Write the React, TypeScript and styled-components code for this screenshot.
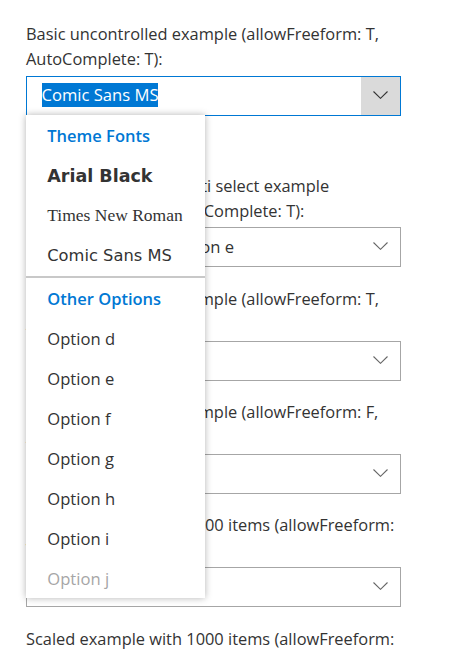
import React from 'react';
import styled, { createGlobalStyle } from 'styled-components';

const GlobalStyle = createGlobalStyle`
  html, body { margin: 0; padding: 0; background: #ffffff; }
  body {
    font-family: "Open Sans", "Noto Sans", sans-serif;
    color: #333333;
  }
  * { box-sizing: border-box; }
`;

const Page = styled.div`
  display: flex;
  flex-direction: column;
  gap: 13.75px;
  padding: 16px 0 0 26px;
`;

const Field = styled.div`
  display: flex;
  flex-direction: column;
  width: 375px;
`;

const Label = styled.label`
  display: block;
  padding: 4.75px 0;
  font-size: 16.4px;
  line-height: 25px;
  font-weight: 400;
  color: #333333;
`;

const ComboRoot = styled.div<{ $focused?: boolean }>`
  position: relative;
  display: flex;
  height: 40px;
  border: 1.25px solid ${(p) => (p.$focused ? '#0078d4' : '#a6a6a6')};
  background: #ffffff;
`;

const InputArea = styled.div`
  flex: 1;
  display: flex;
  align-items: center;
  padding: 0 0 2px 14.5px;
  font-size: 16.6px;
  color: #333333;
  white-space: nowrap;
  overflow: hidden;
`;

const Selected = styled.span`
  display: inline-block;
  line-height: 24px;
  background: #0078d4;
  color: #ffffff;
`;

const CaretButton = styled.div<{ $active?: boolean }>`
  flex: 0 0 39.5px;
  display: flex;
  align-items: center;
  justify-content: center;
  padding-bottom: 2px;
  background: ${(p) => (p.$active ? '#dadada' : 'transparent')};
  color: ${(p) => (p.$active ? '#333333' : '#666666')};
`;

const SetFocusButton = styled.button`
  height: 38.5px;
  width: 100px;
  border: none;
  background: #0078d4;
  color: #ffffff;
  font-family: "Open Sans", sans-serif;
  font-size: 16.3px;
  font-weight: 600;
  padding: 0;
`;

const Dropdown = styled.div`
  position: absolute;
  top: 100%;
  left: -1.25px;
  width: 179px;
  z-index: 10;
  background: #ffffff;
  box-shadow: 0 0 7px rgba(0, 0, 0, 0.3);
  padding-top: 1px;
  display: flex;
  flex-direction: column;
`;

const Header = styled.div`
  height: 40px;
  display: flex;
  align-items: center;
  padding: 0 21px 0 21.5px;
  font-size: 16.5px;
  font-weight: 600;
  color: #0078d4;
`;

type FontKind = 'default' | 'black' | 'serif' | 'comic';

const fontMap: Record<FontKind, string> = {
  default: `font-family: "Open Sans", "Noto Sans", sans-serif; font-size: 16.6px;`,
  black: `font-family: "Arial Black", "DejaVu Sans", sans-serif; font-weight: 700; font-size: 17.5px;`,
  serif: `font-family: "Times New Roman", "Liberation Serif", serif; font-size: 17.5px;`,
  comic: `font-family: "Comic Sans MS", "DejaVu Sans", sans-serif; font-size: 16.3px;`,
};

const Option = styled.div<{ $font?: FontKind; $disabled?: boolean }>`
  height: 40px;
  display: flex;
  align-items: center;
  padding: 0 21px 0 21.5px;
  white-space: nowrap;
  color: ${(p) => (p.$disabled ? '#a6a6a6' : '#333333')};
  ${(p) => fontMap[p.$font || 'default']}
`;

const Divider = styled.div`
  height: 1.25px;
  margin: 0.75px 0 0.75px;
  background: #c8c8c8;
`;

const Chevron = () => (
  <svg width="15" height="8" viewBox="0 0 15 8" aria-hidden="true">
    <polyline points="0.5,0.5 7.5,7.3 14.5,0.5" fill="none" stroke="currentColor" strokeWidth="1.1" />
  </svg>
);

const options: { key: string; text: string; disabled?: boolean }[] = [
  { key: 'D', text: 'Option d' },
  { key: 'E', text: 'Option e' },
  { key: 'F', text: 'Option f' },
  { key: 'G', text: 'Option g' },
  { key: 'H', text: 'Option h' },
  { key: 'I', text: 'Option i' },
  { key: 'J', text: 'Option j', disabled: true },
];

function ComboBox({ value, children, focused }: { value?: React.ReactNode; children?: React.ReactNode; focused?: boolean }) {
  return (
    <ComboRoot $focused={focused}>
      <InputArea>{value}</InputArea>
      <CaretButton $active={focused}>
        <Chevron />
      </CaretButton>
      {children}
    </ComboRoot>
  );
}

export default function App() {
  return (
    <>
      <GlobalStyle />
      <Page>
        <Field>
          <Label>Basic uncontrolled example (allowFreeform: T, AutoComplete: T):</Label>
          <ComboBox focused value={<Selected>Comic Sans MS</Selected>}>
            <Dropdown role="listbox">
              <Header>Theme Fonts</Header>
              <Option $font="black">Arial Black</Option>
              <Option $font="serif">Times New Roman</Option>
              <Option $font="comic">Comic Sans MS</Option>
              <Divider />
              <Header>Other Options</Header>
              {options.map((o) => (
                <Option key={o.key} $disabled={o.disabled}>
                  {o.text}
                </Option>
              ))}
            </Dropdown>
          </ComboBox>
          <SetFocusButton>Set focus</SetFocusButton>
        </Field>
        <Field>
          <Label>Basic uncontrolled multi select example (allowFreeform: T, AutoComplete: T):</Label>
          <ComboBox value="Comic Sans MS, Option e" />
        </Field>
        <Field>
          <Label>Basic uncontrolled example (allowFreeform: T, AutoComplete: F):</Label>
          <ComboBox />
        </Field>
        <Field>
          <Label>Basic uncontrolled example (allowFreeform: F, AutoComplete: T):</Label>
          <ComboBox />
        </Field>
        <Field>
          <Label>Scaled example with 1000 items (allowFreeform: T, AutoComplete: T):</Label>
          <ComboBox />
        </Field>
        <Field>
          <Label>Scaled example with 1000 items (allowFreeform: T, AutoComplete: T):</Label>
          <ComboBox />
        </Field>
      </Page>
    </>
  );
}
